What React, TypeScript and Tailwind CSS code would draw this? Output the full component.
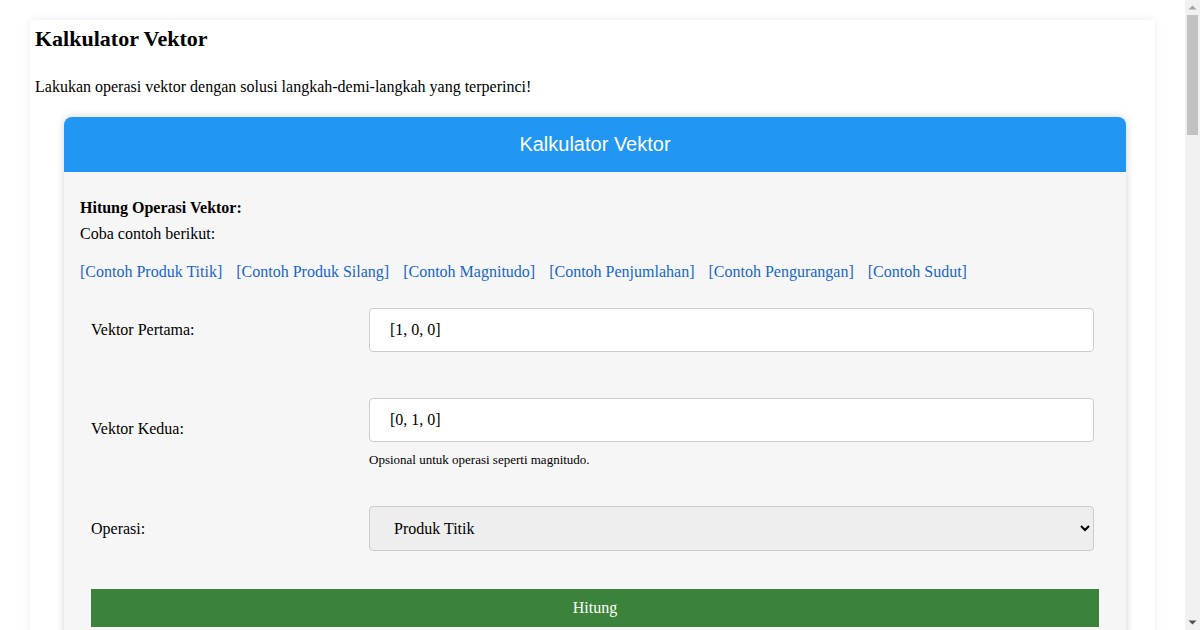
import React from 'react';

const examples = [
  'Contoh Produk Titik',
  'Contoh Produk Silang',
  'Contoh Magnitudo',
  'Contoh Penjumlahan',
  'Contoh Pengurangan',
  'Contoh Sudut',
];

const serif = "font-['Liberation_Serif','Times_New_Roman',serif]";

// drawn copy of the browser's classic scrollbar
function ScrollBar() {
  return (
    <div className="fixed right-0 top-0 w-[15px] h-screen bg-[#f1f1f1] flex flex-col items-center">
      <svg width="15" height="15" viewBox="0 0 15 15" className="shrink-0">
        <path d="M3.5 9.5 L7.5 5.5 L11.5 9.5 Z" fill="#a3a3a3" />
      </svg>
      <div className="w-[11px] h-[120px] bg-[#c1c1c1]" />
      <div className="flex-1" />
      <svg width="15" height="15" viewBox="0 0 15 15" className="shrink-0">
        <path d="M3.5 5.5 L7.5 9.5 L11.5 5.5 Z" fill="#505050" />
      </svg>
    </div>
  );
}

export default function App() {
  return (
    <div className={`bg-white text-black ${serif} pt-5 pb-10`}>
      {/* page container */}
      <div className="w-[1125px] ml-[30px] bg-white px-[5px] pt-[5px] min-h-[3100px] shadow-[0_0_8px_rgba(0,0,0,0.08)]">
        <h2 className="text-[22px] font-bold leading-[27px]">Kalkulator Vektor</h2>
        <p className="text-[16px] leading-[18px] mt-[26px]">
          Lakukan operasi vektor dengan solusi langkah-demi-langkah yang terperinci!
        </p>

        {/* calculator card */}
        <div className="ml-[29px] mt-[21px] w-[1062px] rounded-t-lg bg-[#f6f6f6] shadow-[0_0_8px_rgba(0,0,0,0.18)] min-h-[2900px]">
          <div className="bg-[#2196f3] rounded-t-lg py-4 text-center text-white text-[20px] leading-[23px] font-['Liberation_Sans',Arial,sans-serif]">
            Kalkulator Vektor
          </div>

          <div className="px-4 pt-[23px]">
            <div className="text-[16px] leading-[26px]">
              <div className="font-bold">Hitung Operasi Vektor:</div>
              <div>Coba contoh berikut:</div>
            </div>

            <div className="mt-[12px] flex text-[16px] leading-[26px]">
              {examples.map(e => (
                <span key={e} className="mr-[14px] whitespace-nowrap text-[#1766cc] cursor-pointer">
                  [{e}]
                </span>
              ))}
            </div>

            <div className="px-[11px]">
              {/* Vektor Pertama */}
              <div className="mt-[23px] flex items-center">
                <label className="w-[278px] text-[16px]">Vektor Pertama:</label>
                <input
                  defaultValue="[1, 0, 0]"
                  className="w-[725px] h-[44px] bg-white border border-[#cccccc] rounded px-5 text-[16px] outline-none"
                />
              </div>

              {/* Vektor Kedua */}
              <div className="mt-[46px] flex items-center">
                <label className="w-[278px] text-[16px] mb-[8px]">Vektor Kedua:</label>
                <div className="w-[725px]">
                  <input
                    defaultValue="[0, 1, 0]"
                    className="w-full h-[44px] bg-white border border-[#cccccc] rounded px-5 text-[16px] outline-none"
                  />
                  <div className="mt-[10px] text-[13px] leading-[15px]">
                    Opsional untuk operasi seperti magnitudo.
                  </div>
                </div>
              </div>

              {/* Operasi */}
              <div className="mt-[39px] flex items-center">
                <label className="w-[278px] text-[16px]">Operasi:</label>
                <select
                  defaultValue="dot"
                  className="w-[725px] h-[45px] bg-[#eeeeee] border border-[#cccccc] rounded px-5 text-[16px] outline-none"
                >
                  <option value="dot">Produk Titik</option>
                  <option value="cross">Produk Silang</option>
                  <option value="mag">Magnitudo</option>
                  <option value="add">Penjumlahan</option>
                  <option value="sub">Pengurangan</option>
                  <option value="angle">Sudut</option>
                </select>
              </div>

              <button className="mt-[38px] w-full h-[38px] bg-[#3b833a] text-white text-[16px]">
                Hitung
              </button>
            </div>
          </div>
        </div>
      </div>
      <ScrollBar />
    </div>
  );
}
